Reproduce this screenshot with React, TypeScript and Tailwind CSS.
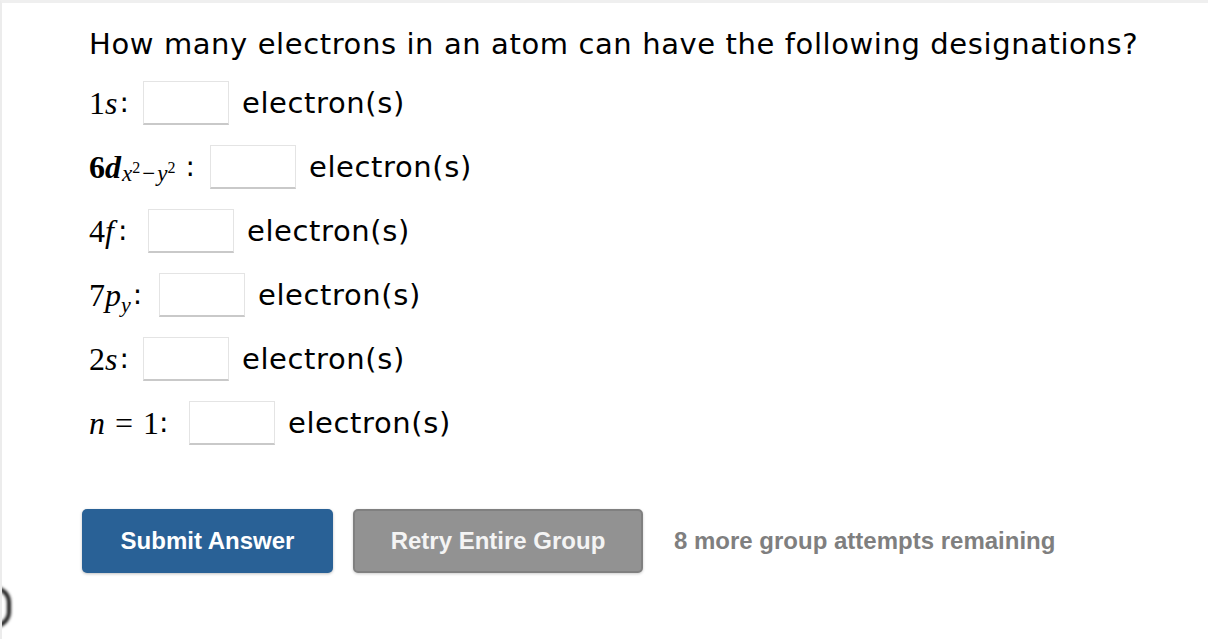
import React from 'react';

interface Row {
  label: React.ReactNode;
  width: string;
}

const mathFont = "font-['Liberation_Serif','DejaVu_Serif',serif] text-[32px]";

const ROWS: Row[] = [
  {
    width: 'w-[42px]',
    label: (
      <>
        <span>1</span>
        <i className="mr-[2px]">s</i>
      </>
    ),
  },
  {
    width: 'w-[109px]',
    label: (
      <>
        <span className="font-bold">6</span>
        <i className="font-bold mr-[1px]">d</i>
        <sub className="text-[23px] italic relative top-[3px] mr-[10px]">
          x<sup className="text-[16px] not-italic">2</sup>
          <span className="not-italic mx-[2px]">−</span>y<sup className="text-[16px] not-italic">2</sup>
        </sub>
      </>
    ),
  },
  {
    width: 'w-[47px]',
    label: (
      <>
        <span>4</span>
        <i className="mr-[4px]">f</i>
      </>
    ),
  },
  {
    width: 'w-[58px]',
    label: (
      <>
        <span>7</span>
        <i>p</i>
        <sub className="text-[22px] italic mr-[2px]">y</sub>
      </>
    ),
  },
  {
    width: 'w-[42px]',
    label: (
      <>
        <span>2</span>
        <i className="mr-[2px]">s</i>
      </>
    ),
  },
  {
    width: 'w-[88px]',
    label: (
      <>
        <i>n</i>
        <span className="mx-[10px]">=</span>
        <span>1</span>
      </>
    ),
  },
];

export default function App() {
  return (
    <div className="relative w-[1208px] h-[639px] overflow-hidden bg-white border-t-[3px] border-t-[#efefef] border-l-2 border-l-[#ececec] font-['DejaVu_Sans',sans-serif] text-black">
      {/* Question */}
      <div className="pl-[87px] pt-[25px]">
        <p className="text-[29px] leading-[32px] tracking-[0.6px] whitespace-nowrap">
          How many electrons in an atom can have the following designations?
        </p>

        <div className="flex flex-col gap-[20px] mt-[21px]">
          {ROWS.map((row, i) => (
            <div key={i} className="flex items-center h-[44px]">
              <span className={`${row.width} flex items-center whitespace-nowrap`}>
                <span className={`${mathFont} leading-none`}>{row.label}</span>
                <span className="text-[28px] leading-none">:</span>
              </span>
              <span className="ml-[12px] w-[86px] h-[44px] bg-white border border-[#e4e4e4] border-b-2 border-b-[#c9c9c9]" />
              <span className="ml-[13px] text-[29px] tracking-[0.6px] leading-none">electron(s)</span>
            </div>
          ))}
        </div>
      </div>

      {/* Actions */}
      <div className="flex items-center pl-[80px] mt-[64px] font-['Liberation_Sans',Arial,sans-serif] font-bold">
        <button className="w-[251px] h-[64px] rounded-[5px] bg-[#296196] text-white text-[24px] shadow-[0_1px_3px_rgba(0,0,0,0.25)]">
          Submit Answer
        </button>
        <button className="ml-[20px] w-[290px] h-[64px] rounded-[5px] bg-[#929292] border-2 border-[#808080] text-[#f4f4f4] text-[24px] shadow-[0_1px_3px_rgba(0,0,0,0.2)]">
          Retry Entire Group
        </button>
        <span className="ml-[31px] text-[24px] text-[#7f7f7f]">
          8 more group attempts remaining
        </span>
      </div>

      {/* stray arc at the bottom-left edge */}
      <div className="absolute left-[-24px] top-[583px] w-[33px] h-[42px] rounded-full border-[4px] border-[#1a1a1a] blur-[1.5px]" />
    </div>
  );
}
